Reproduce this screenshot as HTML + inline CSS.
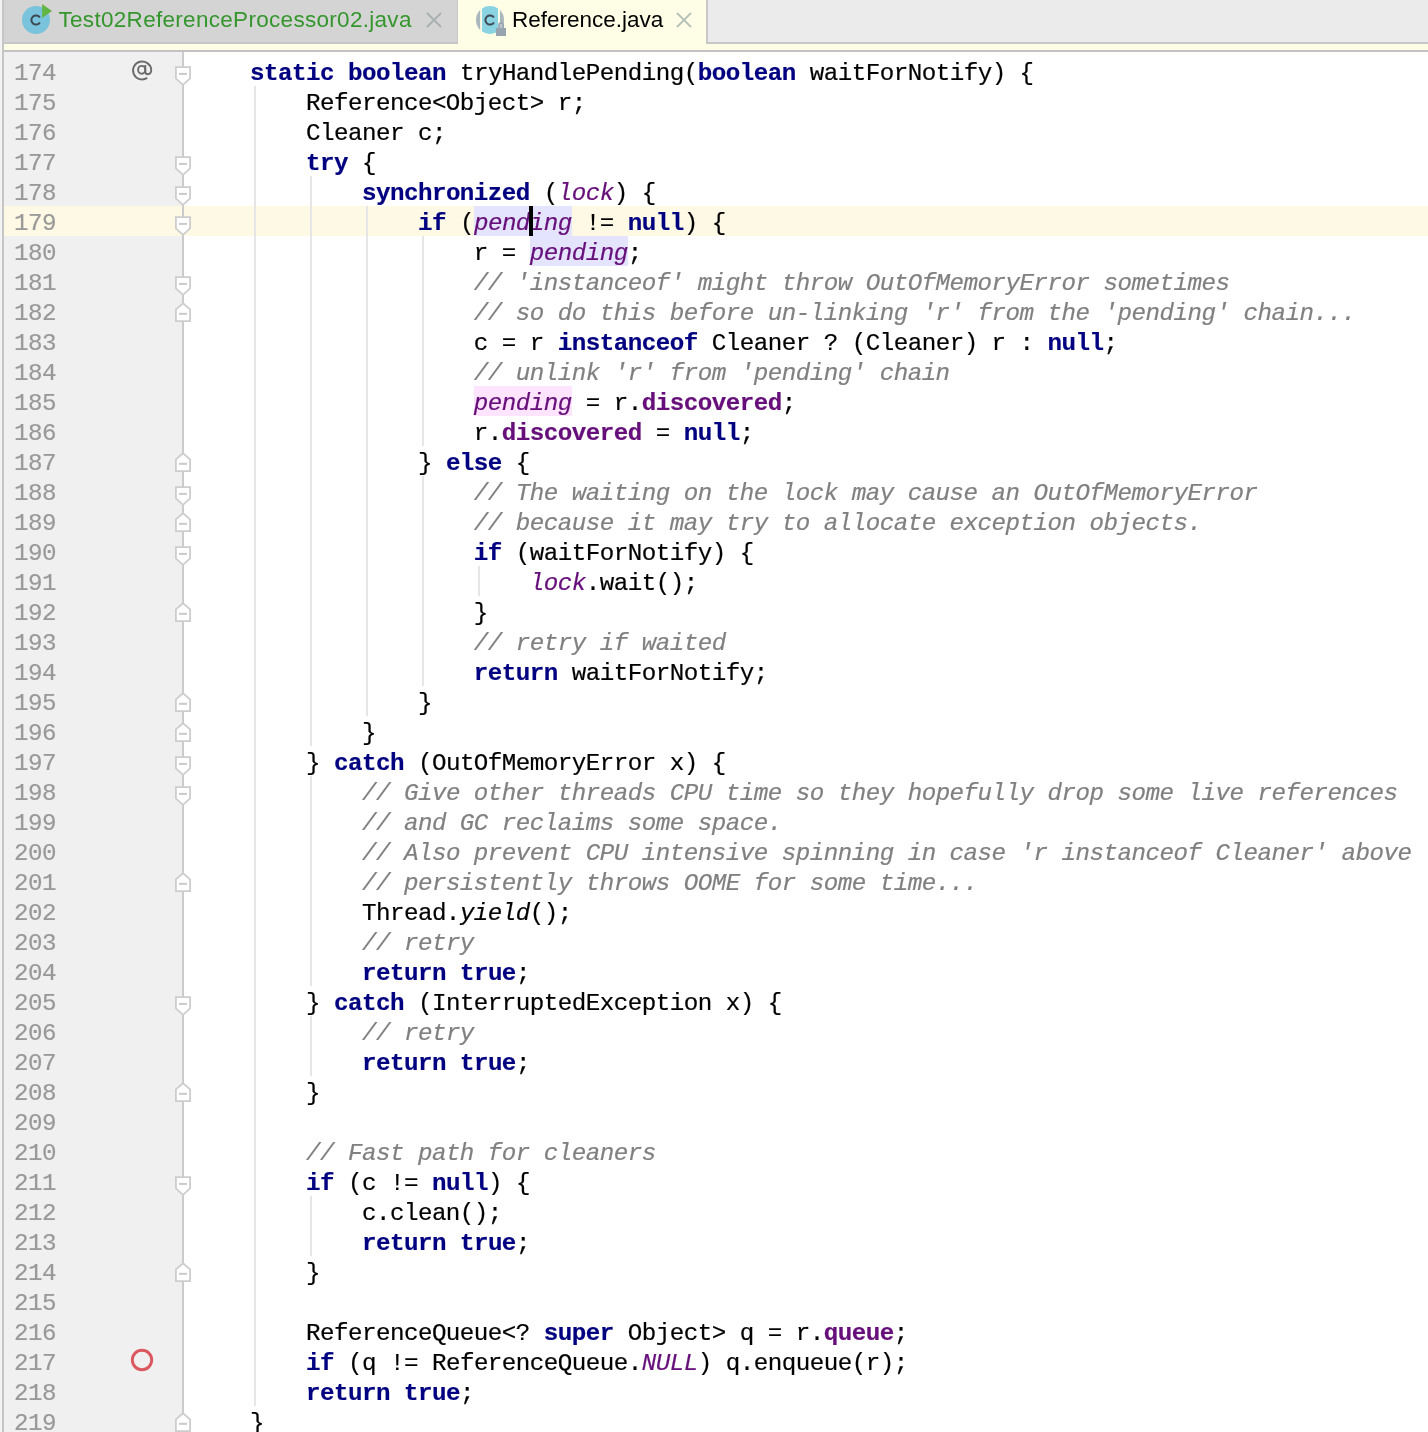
<!DOCTYPE html>
<html><head><meta charset="utf-8"><style>
html,body{margin:0;padding:0;}
body{width:1428px;height:1432px;overflow:hidden;position:relative;background:#fff;font-family:"Liberation Mono",monospace;}
div{position:absolute;}
#ed{left:0;top:0;width:1428px;height:1432px;overflow:hidden;background:#fff;will-change:transform;}
.strip{left:0;top:0;width:2px;height:1432px;background:#f3f3f3;}
.lborder{left:2px;top:0;width:2px;height:1432px;background:#c6c6c6;}
.tabbar{left:4px;top:0;width:1424px;height:42px;background:#ebebeb;}
.tab1{left:4px;top:0;width:453px;height:42px;background:#d4d4d4;border-right:1px solid #c8c8c8;}
.tabline{left:4px;top:42px;width:1424px;height:2px;background:#c6c6c6;}
.tab2{left:458px;top:0;width:248px;height:50px;background:#fefee6;}
.tab2r{left:706px;top:0;width:2px;height:44px;background:#c8c8c8;}
.ystrip{left:4px;top:44px;width:1424px;height:6px;background:#fefee6;}
.hline{left:4px;top:50px;width:1424px;height:2px;background:#c2c2c2;}
.tt{top:-0.7px;height:42px;line-height:42px;font-family:"Liberation Sans",sans-serif;font-size:22.5px;letter-spacing:0.3px;white-space:pre;}
.gut{left:4px;top:52px;width:178px;height:1380px;background:#f0f0f0;}
.gline{left:182px;top:52px;width:2px;height:1380px;background:#cbcbcb;z-index:3;}
.cur{left:4px;width:1424px;height:30px;background:#fef9e4;}
.hlr{height:30px;background:#e4e4ff;}
.hlw{height:30px;background:#ffe4ff;}
.guide{width:2px;background:#e6e6e6;}
.ln{left:194px;height:30px;line-height:30px;font-size:24.2px;letter-spacing:-0.522px;-webkit-text-stroke:0.2px currentColor;white-space:pre;color:#000;padding-top:3px;box-sizing:border-box;}
.num{left:14px;height:30px;line-height:30px;font-size:24.2px;letter-spacing:-0.522px;-webkit-text-stroke:0.2px currentColor;white-space:pre;color:#999;padding-top:3px;box-sizing:border-box;}
.k{color:#000080;font-weight:bold;}
.c{color:#808080;font-style:italic;}
.s,.sh,.sw{color:#660e7a;font-style:italic;}
.f{color:#660e7a;font-weight:bold;}
.i{font-style:italic;}
.caret{width:4px;height:30px;background:#000;z-index:5;}
.ov{position:absolute;left:0;top:0;z-index:4;}
</style></head><body>
<div id="ed"><div class="strip"></div><div class="lborder"></div>
<div class="tabbar"></div><div class="tabline"></div>
<div class="tab1"></div>
<div class="tab2"></div><div class="tab2r"></div>
<div class="ystrip"></div><div class="hline"></div>
<svg style="position:absolute;left:0;top:0" width="720" height="44" viewBox="0 0 720 44">
 <circle cx="36" cy="20" r="14" fill="#79c3dc"/>
 <path d="M39.9,17.6 A4.6,4.6 0 1 0 39.9,22.4" fill="none" stroke="#3d4a52" stroke-width="2"/>
 <polygon points="42.1,4 52,11 42.1,18" fill="#62b543"/>
 <path d="M427,13 L441,27 M441,13 L427,27" stroke="#a9b0b3" stroke-width="1.8"/>
 <defs><clipPath id="cb"><rect x="482" y="0" width="16" height="44"/></clipPath><clipPath id="cg"><rect x="476" y="0" width="4.2" height="44"/><rect x="500" y="0" width="4.2" height="44"/></clipPath></defs>
 <circle cx="490" cy="20" r="14" fill="#8ad3e2" clip-path="url(#cb)"/>
 <circle cx="490" cy="20" r="14" fill="#a9b6bb" clip-path="url(#cg)"/>
 <path d="M493.9,17.6 A4.6,4.6 0 1 0 493.9,22.4" fill="none" stroke="#3d4a52" stroke-width="2"/>
 <rect x="496" y="28" width="10" height="8" fill="#97a3ae"/>
 <path d="M499,28 v-3 a2.1,2.1 0 0 1 4.2,0 v3" fill="#bcc5cc" stroke="#97a3ae" stroke-width="1.6"/>
 <path d="M677,13 L691,27 M691,13 L677,27" stroke="#b8c0ba" stroke-width="1.8"/>
</svg>
<div class="tt" style="left:58.5px;color:#34962c">Test02ReferenceProcessor02.java</div>
<div class="tt" style="left:512px;color:#000;letter-spacing:0">Reference.java</div>
<div class="gut"></div><div class="gline"></div><div class="cur" style="top:206px"></div><div class="hlr" style="left:474px;top:206px;width:98px"></div><div class="hlr" style="left:530px;top:236px;width:98px"></div><div class="hlw" style="left:474px;top:386px;width:98px"></div><div class="guide" style="left:254px;top:86px;height:1320px"></div><div class="guide" style="left:310px;top:176px;height:570px"></div><div class="guide" style="left:366px;top:206px;height:510px"></div><div class="guide" style="left:422px;top:236px;height:210px"></div><div class="guide" style="left:422px;top:476px;height:210px"></div><div class="guide" style="left:478px;top:566px;height:30px"></div><div class="guide" style="left:310px;top:776px;height:210px"></div><div class="guide" style="left:310px;top:1016px;height:60px"></div><div class="guide" style="left:310px;top:1196px;height:60px"></div><div class="ln" style="top:56px">    <span class="k">static</span> <span class="k">boolean</span> tryHandlePending(<span class="k">boolean</span> waitForNotify) {</div><div class="num" style="top:56px">174</div><div class="ln" style="top:86px">        Reference&lt;Object&gt; r;</div><div class="num" style="top:86px">175</div><div class="ln" style="top:116px">        Cleaner c;</div><div class="num" style="top:116px">176</div><div class="ln" style="top:146px">        <span class="k">try</span> {</div><div class="num" style="top:146px">177</div><div class="ln" style="top:176px">            <span class="k">synchronized</span> (<span class="s">lock</span>) {</div><div class="num" style="top:176px">178</div><div class="ln" style="top:206px">                <span class="k">if</span> (<span class="sh">pending</span> != <span class="k">null</span>) {</div><div class="num" style="top:206px">179</div><div class="ln" style="top:236px">                    r = <span class="sh">pending</span>;</div><div class="num" style="top:236px">180</div><div class="ln" style="top:266px">                    <span class="c">// &#x27;instanceof&#x27; might throw OutOfMemoryError sometimes</span></div><div class="num" style="top:266px">181</div><div class="ln" style="top:296px">                    <span class="c">// so do this before un-linking &#x27;r&#x27; from the &#x27;pending&#x27; chain...</span></div><div class="num" style="top:296px">182</div><div class="ln" style="top:326px">                    c = r <span class="k">instanceof</span> Cleaner ? (Cleaner) r : <span class="k">null</span>;</div><div class="num" style="top:326px">183</div><div class="ln" style="top:356px">                    <span class="c">// unlink &#x27;r&#x27; from &#x27;pending&#x27; chain</span></div><div class="num" style="top:356px">184</div><div class="ln" style="top:386px">                    <span class="sw">pending</span> = r.<span class="f">discovered</span>;</div><div class="num" style="top:386px">185</div><div class="ln" style="top:416px">                    r.<span class="f">discovered</span> = <span class="k">null</span>;</div><div class="num" style="top:416px">186</div><div class="ln" style="top:446px">                } <span class="k">else</span> {</div><div class="num" style="top:446px">187</div><div class="ln" style="top:476px">                    <span class="c">// The waiting on the lock may cause an OutOfMemoryError</span></div><div class="num" style="top:476px">188</div><div class="ln" style="top:506px">                    <span class="c">// because it may try to allocate exception objects.</span></div><div class="num" style="top:506px">189</div><div class="ln" style="top:536px">                    <span class="k">if</span> (waitForNotify) {</div><div class="num" style="top:536px">190</div><div class="ln" style="top:566px">                        <span class="s">lock</span>.wait();</div><div class="num" style="top:566px">191</div><div class="ln" style="top:596px">                    }</div><div class="num" style="top:596px">192</div><div class="ln" style="top:626px">                    <span class="c">// retry if waited</span></div><div class="num" style="top:626px">193</div><div class="ln" style="top:656px">                    <span class="k">return</span> waitForNotify;</div><div class="num" style="top:656px">194</div><div class="ln" style="top:686px">                }</div><div class="num" style="top:686px">195</div><div class="ln" style="top:716px">            }</div><div class="num" style="top:716px">196</div><div class="ln" style="top:746px">        } <span class="k">catch</span> (OutOfMemoryError x) {</div><div class="num" style="top:746px">197</div><div class="ln" style="top:776px">            <span class="c">// Give other threads CPU time so they hopefully drop some live references</span></div><div class="num" style="top:776px">198</div><div class="ln" style="top:806px">            <span class="c">// and GC reclaims some space.</span></div><div class="num" style="top:806px">199</div><div class="ln" style="top:836px">            <span class="c">// Also prevent CPU intensive spinning in case &#x27;r instanceof Cleaner&#x27; above</span></div><div class="num" style="top:836px">200</div><div class="ln" style="top:866px">            <span class="c">// persistently throws OOME for some time...</span></div><div class="num" style="top:866px">201</div><div class="ln" style="top:896px">            Thread.<span class="i">yield</span>();</div><div class="num" style="top:896px">202</div><div class="ln" style="top:926px">            <span class="c">// retry</span></div><div class="num" style="top:926px">203</div><div class="ln" style="top:956px">            <span class="k">return</span> <span class="k">true</span>;</div><div class="num" style="top:956px">204</div><div class="ln" style="top:986px">        } <span class="k">catch</span> (InterruptedException x) {</div><div class="num" style="top:986px">205</div><div class="ln" style="top:1016px">            <span class="c">// retry</span></div><div class="num" style="top:1016px">206</div><div class="ln" style="top:1046px">            <span class="k">return</span> <span class="k">true</span>;</div><div class="num" style="top:1046px">207</div><div class="ln" style="top:1076px">        }</div><div class="num" style="top:1076px">208</div><div class="ln" style="top:1106px"></div><div class="num" style="top:1106px">209</div><div class="ln" style="top:1136px">        <span class="c">// Fast path for cleaners</span></div><div class="num" style="top:1136px">210</div><div class="ln" style="top:1166px">        <span class="k">if</span> (c != <span class="k">null</span>) {</div><div class="num" style="top:1166px">211</div><div class="ln" style="top:1196px">            c.clean();</div><div class="num" style="top:1196px">212</div><div class="ln" style="top:1226px">            <span class="k">return</span> <span class="k">true</span>;</div><div class="num" style="top:1226px">213</div><div class="ln" style="top:1256px">        }</div><div class="num" style="top:1256px">214</div><div class="ln" style="top:1286px"></div><div class="num" style="top:1286px">215</div><div class="ln" style="top:1316px">        ReferenceQueue&lt;? <span class="k">super</span> Object&gt; q = r.<span class="f">queue</span>;</div><div class="num" style="top:1316px">216</div><div class="ln" style="top:1346px">        <span class="k">if</span> (q != ReferenceQueue.<span class="s">NULL</span>) q.enqueue(r);</div><div class="num" style="top:1346px">217</div><div class="ln" style="top:1376px">        <span class="k">return</span> <span class="k">true</span>;</div><div class="num" style="top:1376px">218</div><div class="ln" style="top:1406px">    }</div><div class="num" style="top:1406px">219</div><svg class="ov" width="1428" height="1432" viewBox="0 0 1428 1432"><polygon points="175.9,67.1 190.1,67.1 190.1,78.4 183,84.9 175.9,78.4" fill="#fff" stroke="#cdcdcd" stroke-width="1.8"/><rect x="179" y="72.9" width="8" height="2" fill="#cacaca"/><polygon points="175.9,157.1 190.1,157.1 190.1,168.4 183,174.9 175.9,168.4" fill="#fff" stroke="#cdcdcd" stroke-width="1.8"/><rect x="179" y="162.9" width="8" height="2" fill="#cacaca"/><polygon points="175.9,187.1 190.1,187.1 190.1,198.4 183,204.9 175.9,198.4" fill="#fff" stroke="#cdcdcd" stroke-width="1.8"/><rect x="179" y="192.9" width="8" height="2" fill="#cacaca"/><polygon points="175.9,217.1 190.1,217.1 190.1,228.4 183,234.9 175.9,228.4" fill="#fff" stroke="#cdcdcd" stroke-width="1.8"/><rect x="179" y="222.9" width="8" height="2" fill="#cacaca"/><polygon points="175.9,277.1 190.1,277.1 190.1,288.4 183,294.9 175.9,288.4" fill="#fff" stroke="#cdcdcd" stroke-width="1.8"/><rect x="179" y="282.9" width="8" height="2" fill="#cacaca"/><polygon points="175.9,321.1 190.1,321.1 190.1,309.4 183,303.2 175.9,309.4" fill="#fff" stroke="#cdcdcd" stroke-width="1.8"/><rect x="179" y="312.8" width="8" height="2" fill="#cacaca"/><polygon points="175.9,471.1 190.1,471.1 190.1,459.4 183,453.2 175.9,459.4" fill="#fff" stroke="#cdcdcd" stroke-width="1.8"/><rect x="179" y="462.8" width="8" height="2" fill="#cacaca"/><polygon points="175.9,487.1 190.1,487.1 190.1,498.4 183,504.9 175.9,498.4" fill="#fff" stroke="#cdcdcd" stroke-width="1.8"/><rect x="179" y="492.9" width="8" height="2" fill="#cacaca"/><polygon points="175.9,531.1 190.1,531.1 190.1,519.4 183,513.2 175.9,519.4" fill="#fff" stroke="#cdcdcd" stroke-width="1.8"/><rect x="179" y="522.8" width="8" height="2" fill="#cacaca"/><polygon points="175.9,547.1 190.1,547.1 190.1,558.4 183,564.9 175.9,558.4" fill="#fff" stroke="#cdcdcd" stroke-width="1.8"/><rect x="179" y="552.9" width="8" height="2" fill="#cacaca"/><polygon points="175.9,621.1 190.1,621.1 190.1,609.4 183,603.2 175.9,609.4" fill="#fff" stroke="#cdcdcd" stroke-width="1.8"/><rect x="179" y="612.8" width="8" height="2" fill="#cacaca"/><polygon points="175.9,711.1 190.1,711.1 190.1,699.4 183,693.2 175.9,699.4" fill="#fff" stroke="#cdcdcd" stroke-width="1.8"/><rect x="179" y="702.8" width="8" height="2" fill="#cacaca"/><polygon points="175.9,741.1 190.1,741.1 190.1,729.4 183,723.2 175.9,729.4" fill="#fff" stroke="#cdcdcd" stroke-width="1.8"/><rect x="179" y="732.8" width="8" height="2" fill="#cacaca"/><polygon points="175.9,757.1 190.1,757.1 190.1,768.4 183,774.9 175.9,768.4" fill="#fff" stroke="#cdcdcd" stroke-width="1.8"/><rect x="179" y="762.9" width="8" height="2" fill="#cacaca"/><polygon points="175.9,787.1 190.1,787.1 190.1,798.4 183,804.9 175.9,798.4" fill="#fff" stroke="#cdcdcd" stroke-width="1.8"/><rect x="179" y="792.9" width="8" height="2" fill="#cacaca"/><polygon points="175.9,891.1 190.1,891.1 190.1,879.4 183,873.2 175.9,879.4" fill="#fff" stroke="#cdcdcd" stroke-width="1.8"/><rect x="179" y="882.8" width="8" height="2" fill="#cacaca"/><polygon points="175.9,997.1 190.1,997.1 190.1,1008.4 183,1014.9 175.9,1008.4" fill="#fff" stroke="#cdcdcd" stroke-width="1.8"/><rect x="179" y="1002.9" width="8" height="2" fill="#cacaca"/><polygon points="175.9,1101.1 190.1,1101.1 190.1,1089.4 183,1083.2 175.9,1089.4" fill="#fff" stroke="#cdcdcd" stroke-width="1.8"/><rect x="179" y="1092.8" width="8" height="2" fill="#cacaca"/><polygon points="175.9,1177.1 190.1,1177.1 190.1,1188.4 183,1194.9 175.9,1188.4" fill="#fff" stroke="#cdcdcd" stroke-width="1.8"/><rect x="179" y="1182.9" width="8" height="2" fill="#cacaca"/><polygon points="175.9,1281.1 190.1,1281.1 190.1,1269.4 183,1263.2 175.9,1269.4" fill="#fff" stroke="#cdcdcd" stroke-width="1.8"/><rect x="179" y="1272.8" width="8" height="2" fill="#cacaca"/><polygon points="175.9,1431.1 190.1,1431.1 190.1,1419.4 183,1413.2 175.9,1419.4" fill="#fff" stroke="#cdcdcd" stroke-width="1.8"/><rect x="179" y="1422.8" width="8" height="2" fill="#cacaca"/><circle cx="142" cy="1360" r="9.7" fill="none" stroke="#db5860" stroke-width="2.9"/><g fill="none" stroke="#6b6b6b" stroke-width="1.9"><path d="M147.2,77.9 A9.15,8.95 0 1 1 151.25,69.6 C151.25,72.9 149.5,74.3 147.8,74.3 C146.1,74.3 145.3,73.2 145.3,71.6 L145.3,65.1"/><ellipse cx="141.7" cy="69.8" rx="3.6" ry="3.95"/></g></svg><div class="caret" style="left:529px;top:206px"></div></div></body></html>
